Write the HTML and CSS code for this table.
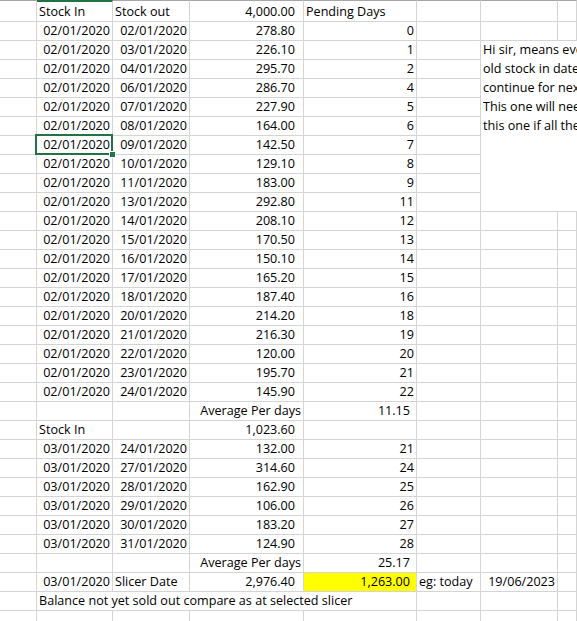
FILE: index.html
```html
<!DOCTYPE html>
<html>
<head>
<meta charset="utf-8">
<link rel="stylesheet" href="styles.css">
</head>
<body>
<div class="sheet">
  <div class="row top"><div class="c"></div><div class="c hsel"></div><div class="c"></div><div class="c"></div><div class="c"></div><div class="c"></div><div class="c"></div><div class="c"></div></div>

  <div class="row"><div class="c"></div><div class="c">Stock In</div><div class="c">Stock out</div><div class="c r acct">4,000.00</div><div class="c">Pending Days</div><div class="c"></div><div class="c"></div><div class="c"></div></div>
  <div class="row"><div class="c"></div><div class="c r">02/01/2020</div><div class="c r">02/01/2020</div><div class="c r acct">278.80</div><div class="c r">0</div><div class="c"></div><div class="c"></div><div class="c"></div></div>
  <div class="row"><div class="c"></div><div class="c r">02/01/2020</div><div class="c r">03/01/2020</div><div class="c r acct">226.10</div><div class="c r">1</div><div class="c"></div><div class="c note">Hi sir, means every time the</div></div>
  <div class="row"><div class="c"></div><div class="c r">02/01/2020</div><div class="c r">04/01/2020</div><div class="c r acct">295.70</div><div class="c r">2</div><div class="c"></div><div class="c note">old stock in date will be</div></div>
  <div class="row"><div class="c"></div><div class="c r">02/01/2020</div><div class="c r">06/01/2020</div><div class="c r acct">286.70</div><div class="c r">4</div><div class="c"></div><div class="c note">continue for next stock in.</div></div>
  <div class="row"><div class="c"></div><div class="c r">02/01/2020</div><div class="c r">07/01/2020</div><div class="c r acct">227.90</div><div class="c r">5</div><div class="c"></div><div class="c note">This one will need to use</div></div>
  <div class="row"><div class="c"></div><div class="c r">02/01/2020</div><div class="c r">08/01/2020</div><div class="c r acct">164.00</div><div class="c r">6</div><div class="c"></div><div class="c note">this one if all the stock</div></div>
  <div class="row"><div class="c"></div><div class="c r sel">02/01/2020<span class="handle"></span></div><div class="c r">09/01/2020</div><div class="c r acct">142.50</div><div class="c r">7</div><div class="c"></div><div class="c note"></div></div>
  <div class="row"><div class="c"></div><div class="c r">02/01/2020</div><div class="c r">10/01/2020</div><div class="c r acct">129.10</div><div class="c r">8</div><div class="c"></div><div class="c note"></div></div>
  <div class="row"><div class="c"></div><div class="c r">02/01/2020</div><div class="c r">11/01/2020</div><div class="c r acct">183.00</div><div class="c r">9</div><div class="c"></div><div class="c note"></div></div>
  <div class="row"><div class="c"></div><div class="c r">02/01/2020</div><div class="c r">13/01/2020</div><div class="c r acct">292.80</div><div class="c r">11</div><div class="c"></div><div class="c note last"></div></div>
  <div class="row"><div class="c"></div><div class="c r">02/01/2020</div><div class="c r">14/01/2020</div><div class="c r acct">208.10</div><div class="c r">12</div><div class="c"></div><div class="c"></div><div class="c"></div></div>
  <div class="row"><div class="c"></div><div class="c r">02/01/2020</div><div class="c r">15/01/2020</div><div class="c r acct">170.50</div><div class="c r">13</div><div class="c"></div><div class="c"></div><div class="c"></div></div>
  <div class="row"><div class="c"></div><div class="c r">02/01/2020</div><div class="c r">16/01/2020</div><div class="c r acct">150.10</div><div class="c r">14</div><div class="c"></div><div class="c"></div><div class="c"></div></div>
  <div class="row"><div class="c"></div><div class="c r">02/01/2020</div><div class="c r">17/01/2020</div><div class="c r acct">165.20</div><div class="c r">15</div><div class="c"></div><div class="c"></div><div class="c"></div></div>
  <div class="row"><div class="c"></div><div class="c r">02/01/2020</div><div class="c r">18/01/2020</div><div class="c r acct">187.40</div><div class="c r">16</div><div class="c"></div><div class="c"></div><div class="c"></div></div>
  <div class="row"><div class="c"></div><div class="c r">02/01/2020</div><div class="c r">20/01/2020</div><div class="c r acct">214.20</div><div class="c r">18</div><div class="c"></div><div class="c"></div><div class="c"></div></div>
  <div class="row"><div class="c"></div><div class="c r">02/01/2020</div><div class="c r">21/01/2020</div><div class="c r acct">216.30</div><div class="c r">19</div><div class="c"></div><div class="c"></div><div class="c"></div></div>
  <div class="row"><div class="c"></div><div class="c r">02/01/2020</div><div class="c r">22/01/2020</div><div class="c r acct">120.00</div><div class="c r">20</div><div class="c"></div><div class="c"></div><div class="c"></div></div>
  <div class="row"><div class="c"></div><div class="c r">02/01/2020</div><div class="c r">23/01/2020</div><div class="c r acct">195.70</div><div class="c r">21</div><div class="c"></div><div class="c"></div><div class="c"></div></div>
  <div class="row"><div class="c"></div><div class="c r">02/01/2020</div><div class="c r">24/01/2020</div><div class="c r acct">145.90</div><div class="c r">22</div><div class="c"></div><div class="c"></div><div class="c"></div></div>
  <div class="row"><div class="c"></div><div class="c"></div><div class="c"></div><div class="c r">Average Per days</div><div class="c r dec">11.15</div><div class="c"></div><div class="c"></div><div class="c"></div></div>
  <div class="row"><div class="c"></div><div class="c">Stock In</div><div class="c"></div><div class="c r acct">1,023.60</div><div class="c"></div><div class="c"></div><div class="c"></div><div class="c"></div></div>
  <div class="row"><div class="c"></div><div class="c r">03/01/2020</div><div class="c r">24/01/2020</div><div class="c r acct">132.00</div><div class="c r">21</div><div class="c"></div><div class="c"></div><div class="c"></div></div>
  <div class="row"><div class="c"></div><div class="c r">03/01/2020</div><div class="c r">27/01/2020</div><div class="c r acct">314.60</div><div class="c r">24</div><div class="c"></div><div class="c"></div><div class="c"></div></div>
  <div class="row"><div class="c"></div><div class="c r">03/01/2020</div><div class="c r">28/01/2020</div><div class="c r acct">162.90</div><div class="c r">25</div><div class="c"></div><div class="c"></div><div class="c"></div></div>
  <div class="row"><div class="c"></div><div class="c r">03/01/2020</div><div class="c r">29/01/2020</div><div class="c r acct">106.00</div><div class="c r">26</div><div class="c"></div><div class="c"></div><div class="c"></div></div>
  <div class="row"><div class="c"></div><div class="c r">03/01/2020</div><div class="c r">30/01/2020</div><div class="c r acct">183.20</div><div class="c r">27</div><div class="c"></div><div class="c"></div><div class="c"></div></div>
  <div class="row"><div class="c"></div><div class="c r">03/01/2020</div><div class="c r">31/01/2020</div><div class="c r acct">124.90</div><div class="c r">28</div><div class="c"></div><div class="c"></div><div class="c"></div></div>
  <div class="row"><div class="c"></div><div class="c"></div><div class="c"></div><div class="c r">Average Per days</div><div class="c r dec">25.17</div><div class="c"></div><div class="c"></div><div class="c"></div></div>
  <div class="row"><div class="c"></div><div class="c r">03/01/2020</div><div class="c">Slicer Date</div><div class="c r acct">2,976.40</div><div class="c r dec yellow">1,263.00</div><div class="c">eg: today</div><div class="c r">19/06/2023</div><div class="c"></div></div>
  <div class="row"><div class="c"></div><div class="c span4">Balance not yet sold out compare as at selected slicer</div><div class="c"></div><div class="c"></div><div class="c"></div></div>
  <div class="row"><div class="c"></div><div class="c"></div><div class="c"></div><div class="c"></div><div class="c"></div><div class="c"></div><div class="c"></div><div class="c"></div></div>
</div>
</body>
</html>
```

FILE: styles.css
```css
html, body {
  margin: 0;
  padding: 0;
  overflow: hidden;
  background: #ffffff;
}

body {
  font-family: "Open Sans", "Liberation Sans", sans-serif;
  font-size: 12.6px;
  color: #000000;
}

.sheet {
  width: 577px;
  overflow: hidden;
}

.row {
  display: grid;
  grid-template-columns: 37px 76px 77px 114px 113px 64px 77px 1fr;
  height: 19px;
}

.c {
  box-sizing: border-box;
  height: 19px;
  min-width: 0;
  padding: 0 2px;
  line-height: 18px;
  white-space: nowrap;
  border-right: 1px solid #d4d4d4;
  border-bottom: 1px solid #d4d4d4;
}

.r {
  text-align: right;
}

.acct {
  padding-right: 8px;
}

.dec {
  padding-right: 6px;
}

.yellow {
  background: #ffff00;
}

.span4 {
  grid-column: span 4;
}

.note {
  grid-column: span 2;
  border-bottom: none;
  border-right: none;
  overflow: hidden;
  background: #ffffff;
}

.note.last {
  border-bottom: 1px solid #d4d4d4;
}

.top {
  height: 3px;
}

.top .c {
  height: 3px;
  border-bottom: none;
  border-top: 1px solid #a6a6a6;
}

.top .hsel {
  border-top: 2px solid #217346;
}

.sel {
  position: relative;
}

.sel::after {
  content: "";
  position: absolute;
  left: -2px;
  top: -2px;
  right: -1px;
  bottom: -1px;
  border: 2px solid #217346;
  pointer-events: none;
}

.handle {
  position: absolute;
  right: -4px;
  bottom: -4px;
  width: 5px;
  height: 5px;
  background: #217346;
  border: 1px solid #ffffff;
  z-index: 2;
}
```
